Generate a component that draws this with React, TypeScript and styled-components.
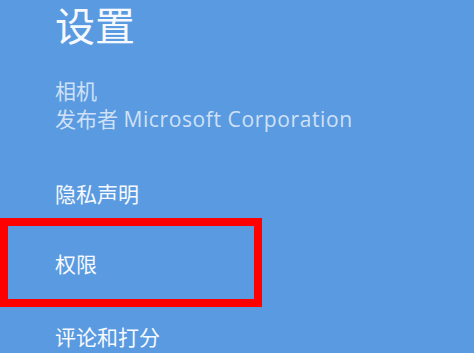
import styled, { createGlobalStyle } from 'styled-components';

const GlobalStyle = createGlobalStyle`
    html, body {
        margin: 0;
        padding: 0;
        background: #5a9ae0;
    }
`;

const Panel = styled.div`
    width: 474px;
    height: 353px;
    overflow: hidden;
    background-color: #5a9ae0;
    font-family: "Open Sans", "Noto Sans CJK SC", sans-serif;
    color: #f6f9fd;
`;

const Title = styled.h1`
    margin: 0;
    padding-left: 55px;
    font-family: "Noto Sans CJK SC", sans-serif;
    font-size: 40px;
    font-weight: 400;
    line-height: 48px;
`;

const AppInfo = styled.div`
    margin-top: 29px;
    padding-left: 55px;
    color: #cfe1f6;
    font-size: 21px;
    line-height: 28px;
`;

const InfoLine = styled.div`
    white-space: nowrap;
`;

const Publisher = styled.span`
    letter-spacing: 0.6px;
`;

const Menu = styled.nav`
    display: flex;
    flex-direction: column;
    margin-top: 50px;
`;

const MenuItem = styled.div<{ $highlighted?: boolean }>`
    font-family: "Noto Sans CJK SC", sans-serif;
    font-size: 21px;
    line-height: 20px;
    height: 20px;
    padding-left: 55px;
    &:not(:first-child) {
        margin-top: 19px;
    }

    ${({ $highlighted }) => $highlighted && `
        box-sizing: border-box;
        width: 262px;
        height: 89px;
        padding: 27px 0 0 47px;
        border: 8px solid #fe0000;
        &:not(:first-child) {
            margin-top: 15px;
        }
    `}
`;

export default function App() {
    return (
        <Panel>
            <GlobalStyle />
            <Title>设置</Title>
            <AppInfo>
                <InfoLine>相机</InfoLine>
                <InfoLine>发布者 <Publisher>Microsoft Corporation</Publisher></InfoLine>
            </AppInfo>
            <Menu>
                <MenuItem>隐私声明</MenuItem>
                <MenuItem $highlighted>权限</MenuItem>
                <MenuItem>评论和打分</MenuItem>
            </Menu>
        </Panel>
    );
}
